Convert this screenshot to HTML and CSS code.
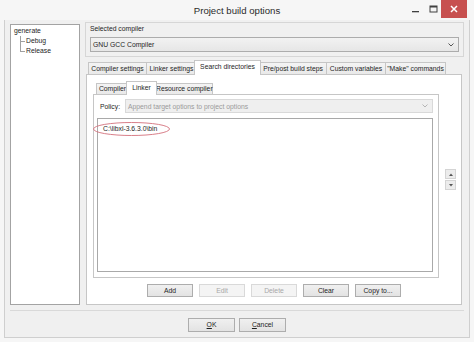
FILE: index.html
```html
<!DOCTYPE html>
<html lang="en">
<head>
  <meta charset="UTF-8">
  <title>Project build options</title>
  <link rel="stylesheet" href="styles.css">
</head>
<body>
  <div class="window">
    <div class="titlebar">
      <span></span>
      <span class="title">Project build options</span>
      <div class="controls">
        <span class="ctl ctl-min">
          <svg width="8" height="8" viewBox="0 0 8 8"><rect x="0" y="6" width="7" height="1.3" fill="#404040"/></svg>
        </span>
        <span class="ctl ctl-max">
          <svg width="9" height="8" viewBox="0 0 9 8"><rect x="1" y="1" width="7" height="6" fill="none" stroke="#404040" stroke-width="1"/><rect x="1" y="1" width="7" height="1.5" fill="#404040"/></svg>
        </span>
        <span class="ctl ctl-close">
          <svg width="8" height="8" viewBox="0 0 8 8"><path d="M1 1 L7 7 M7 1 L1 7" stroke="#fff" stroke-width="1.5"/></svg>
        </span>
      </div>
    </div>

    <div class="client">
      <div class="main">
        <div class="tree">
          <div>generate</div>
          <div class="tree-children">
            <div class="tree-item">Debug</div>
            <div class="tree-item">Release</div>
          </div>
        </div>

        <div class="right">
          <div class="compiler-panel">
            <div class="label">Selected compiler</div>
            <div class="combo">
              <span>GNU GCC Compiler</span>
              <svg width="6" height="4" viewBox="0 0 6 4"><path d="M0.5 0.5 L3 3 L5.5 0.5" fill="none" stroke="#555" stroke-width="1"/></svg>
            </div>
          </div>

          <div class="notebook">
            <div class="tabs">
              <span class="tab t-cs">Compiler settings</span>
              <span class="tab t-ls">Linker settings</span>
              <span class="tab active t-sd">Search directories</span>
              <span class="tab t-pp">Pre/post build steps</span>
              <span class="tab t-cv">Custom variables</span>
              <span class="tab t-mk">"Make" commands</span>
            </div>
            <div class="pane">
              <div class="pane-row">
                <div class="inner-notebook">
                  <div class="tabs inner-tabs">
                    <span class="tab t-co">Compiler</span>
                    <span class="tab active t-li">Linker</span>
                    <span class="tab t-rc">Resource compiler</span>
                  </div>
                  <div class="inner-pane">
                    <div class="policy-row">
                      <span class="policy-label">Policy:</span>
                      <div class="combo disabled">
                        <span>Append target options to project options</span>
                        <svg width="6" height="4" viewBox="0 0 6 4"><path d="M0.5 0.5 L3 3 L5.5 0.5" fill="none" stroke="#b5b5b5" stroke-width="1"/></svg>
                      </div>
                    </div>
                    <div class="list">
                      <div class="item">C:\libxl-3.6.3.0\bin</div>
                      <svg class="mark" width="77" height="14" viewBox="0 0 77 14"><ellipse cx="38.5" cy="7" rx="38" ry="6.5" fill="none" stroke="#d4707c" stroke-width="0.9"/></svg>
                    </div>
                  </div>
                </div>
                <div class="spin">
                  <span class="spin-btn"><svg width="4" height="3" viewBox="0 0 4 3"><path d="M0 3 L2 0.5 L4 3 Z" fill="#555"/></svg></span>
                  <span class="spin-btn"><svg width="4" height="3" viewBox="0 0 4 3"><path d="M0 0 L2 2.5 L4 0 Z" fill="#555"/></svg></span>
                </div>
              </div>
              <div class="btn-row">
                <span class="btn">Add</span>
                <span class="btn disabled">Edit</span>
                <span class="btn disabled">Delete</span>
                <span class="btn">Clear</span>
                <span class="btn">Copy to...</span>
              </div>
            </div>
          </div>
        </div>
      </div>

      <div class="separator"></div>

      <div class="dialog-buttons">
        <span class="btn dbtn"><u>O</u>K</span>
        <span class="btn dbtn"><u>C</u>ancel</span>
      </div>
    </div>
  </div>
</body>
</html>
```

FILE: styles.css
```css
html, body {
  margin: 0;
  padding: 0;
  width: 474px;
  height: 342px;
  overflow: hidden;
  background-color: #f6f6f6;
  font-family: "Liberation Sans", Arial, sans-serif;
  font-size: 6.8px;
  color: #1e1e1e;
}
.window {
  width: 474px;
  height: 342px;
  display: flex;
  flex-direction: column;
}

/* title bar */
.titlebar {
  height: 20px;
  display: grid;
  grid-template-columns: 1fr auto 1fr;
  align-items: center;
}
.title {
  font-size: 9.6px;
  color: #2b2b2b;
}
.controls {
  justify-self: end;
  align-self: start;
  display: flex;
  margin-right: 7px;
}
.ctl {
  height: 18px;
  display: flex;
  align-items: center;
  justify-content: center;
}
.ctl-min { width: 18px; }
.ctl-max { width: 16px; }
.ctl-close {
  width: 26px;
  background-color: #c7504f;
}

/* dialog body */
.client {
  margin: 0 4px;
  height: 318px;
  box-sizing: border-box;
  border: 1px solid #cfcfcf;
  border-top: none;
  background-color: #f0f0f0;
  padding: 2px 5px 5px;
  display: flex;
  flex-direction: column;
}
.main {
  display: flex;
  gap: 5px;
  height: 283px;
}

/* target tree */
.tree {
  width: 70px;
  height: 281px;
  margin-top: 2px;
  box-sizing: border-box;
  border: 1px solid #a3a3a3;
  background-color: #fff;
  padding: 1px 0 0 3px;
  line-height: 10px;
}
.tree-children {
  margin-left: 6px;
}
.tree-item {
  position: relative;
  padding-left: 6px;
}
.tree-item::before {
  content: "";
  position: absolute;
  left: 0;
  top: 0;
  width: 4px;
  height: 5px;
  border-left: 1px solid #a0a0a0;
  border-bottom: 1px solid #a0a0a0;
}
.tree-item:first-child::after {
  content: "";
  position: absolute;
  left: 0;
  top: 5px;
  height: 5px;
  border-left: 1px solid #a0a0a0;
}

.right {
  width: 379px;
  display: flex;
  flex-direction: column;
}
.compiler-panel {
  height: 35px;
  box-sizing: border-box;
  border: 1px solid #d6d6d6;
  padding: 1px 4px 0;
}
.label {
  line-height: 10px;
}
.combo {
  margin-top: 3px;
  height: 15px;
  box-sizing: border-box;
  border: 1px solid #acacac;
  background: linear-gradient(#f2f2f2, #e6e6e6);
  display: flex;
  align-items: center;
  justify-content: space-between;
  padding: 0 4px 0 2px;
}
.combo.disabled {
  margin-top: 0;
  flex: 1;
  height: 14px;
  border-color: #d9d9d9;
  background: #efefef;
  color: #9a9a9a;
}

/* notebooks */
.notebook {
  margin: 3px 2px 0 1px;
  height: 245px;
  display: flex;
  flex-direction: column;
}
.tabs {
  display: flex;
  align-items: flex-end;
  height: 14px;
  padding-left: 2px;
}
.tab {
  height: 12px;
  box-sizing: border-box;
  border: 1px solid #c6c6c6;
  border-bottom: none;
  background: linear-gradient(#f4f4f4, #e9e9e9);
  margin-right: -1px;
  text-align: center;
  line-height: 11px;
  white-space: nowrap;
}
.tab.active {
  height: 15px;
  margin: 0 -2px -1px -2px;
  background: #fff;
  position: relative;
  z-index: 1;
  line-height: 12px;
}
.t-cs { width: 59px; }
.t-ls { width: 51px; }
.t-sd { width: 67px; }
.t-pp { width: 68px; }
.t-cv { width: 60px; }
.t-mk { width: 61px; }

.pane {
  flex: 1;
  box-sizing: border-box;
  border: 1px solid #c6c6c6;
  background-color: #fff;
  padding: 6px 0 7px 6px;
  display: flex;
  flex-direction: column;
}
.pane-row {
  display: flex;
  height: 197px;
}
.inner-notebook {
  width: 346px;
  display: flex;
  flex-direction: column;
}
.inner-tabs {
  height: 13px;
  padding-left: 3px;
}
.inner-tabs .tab {
  height: 11px;
  line-height: 10px;
}
.inner-tabs .tab.active {
  height: 14px;
  line-height: 12px;
}
.t-co { width: 33px; }
.t-li { width: 31px; }
.t-rc { width: 58px; }

.inner-pane {
  flex: 1;
  box-sizing: border-box;
  border: 1px solid #c6c6c6;
  background-color: #fff;
  padding: 4px 5px 5px 6px;
  display: flex;
  flex-direction: column;
}
.policy-row {
  display: flex;
  align-items: center;
  height: 14px;
}
.policy-label {
  width: 25px;
}
.list {
  margin: 5px 0 0 -3px;
  flex: 1;
  border: 1px solid #a9a9a9;
  position: relative;
  padding: 5px;
  line-height: 10px;
}
.mark {
  position: absolute;
  left: -5px;
  top: 3px;
}
.spin {
  margin: 88px 0 0 6px;
  display: flex;
  flex-direction: column;
  gap: 1px;
}
.spin-btn {
  width: 11px;
  height: 10px;
  box-sizing: border-box;
  border: 1px solid #d4d4d4;
  background-color: #ececec;
  display: flex;
  align-items: center;
  justify-content: center;
}

/* buttons */
.btn-row {
  margin: 6px 0 0 -6px;
  display: flex;
  justify-content: center;
  gap: 6px;
}
.btn {
  width: 46px;
  height: 13px;
  box-sizing: border-box;
  border: 1px solid #adadad;
  background: linear-gradient(#f0f0f0, #e3e3e3);
  text-align: center;
  line-height: 11px;
}
.btn.disabled {
  border-color: #d9d9d9;
  background: #f4f4f4;
  color: #a8a8a8;
}
.separator {
  margin-top: 5px;
  height: 1px;
  background-color: #d9d9d9;
}
.dialog-buttons {
  margin-top: 7px;
  display: flex;
  justify-content: center;
  gap: 4px;
}
.dbtn {
  width: 47px;
  height: 14px;
  line-height: 12px;
}
```
